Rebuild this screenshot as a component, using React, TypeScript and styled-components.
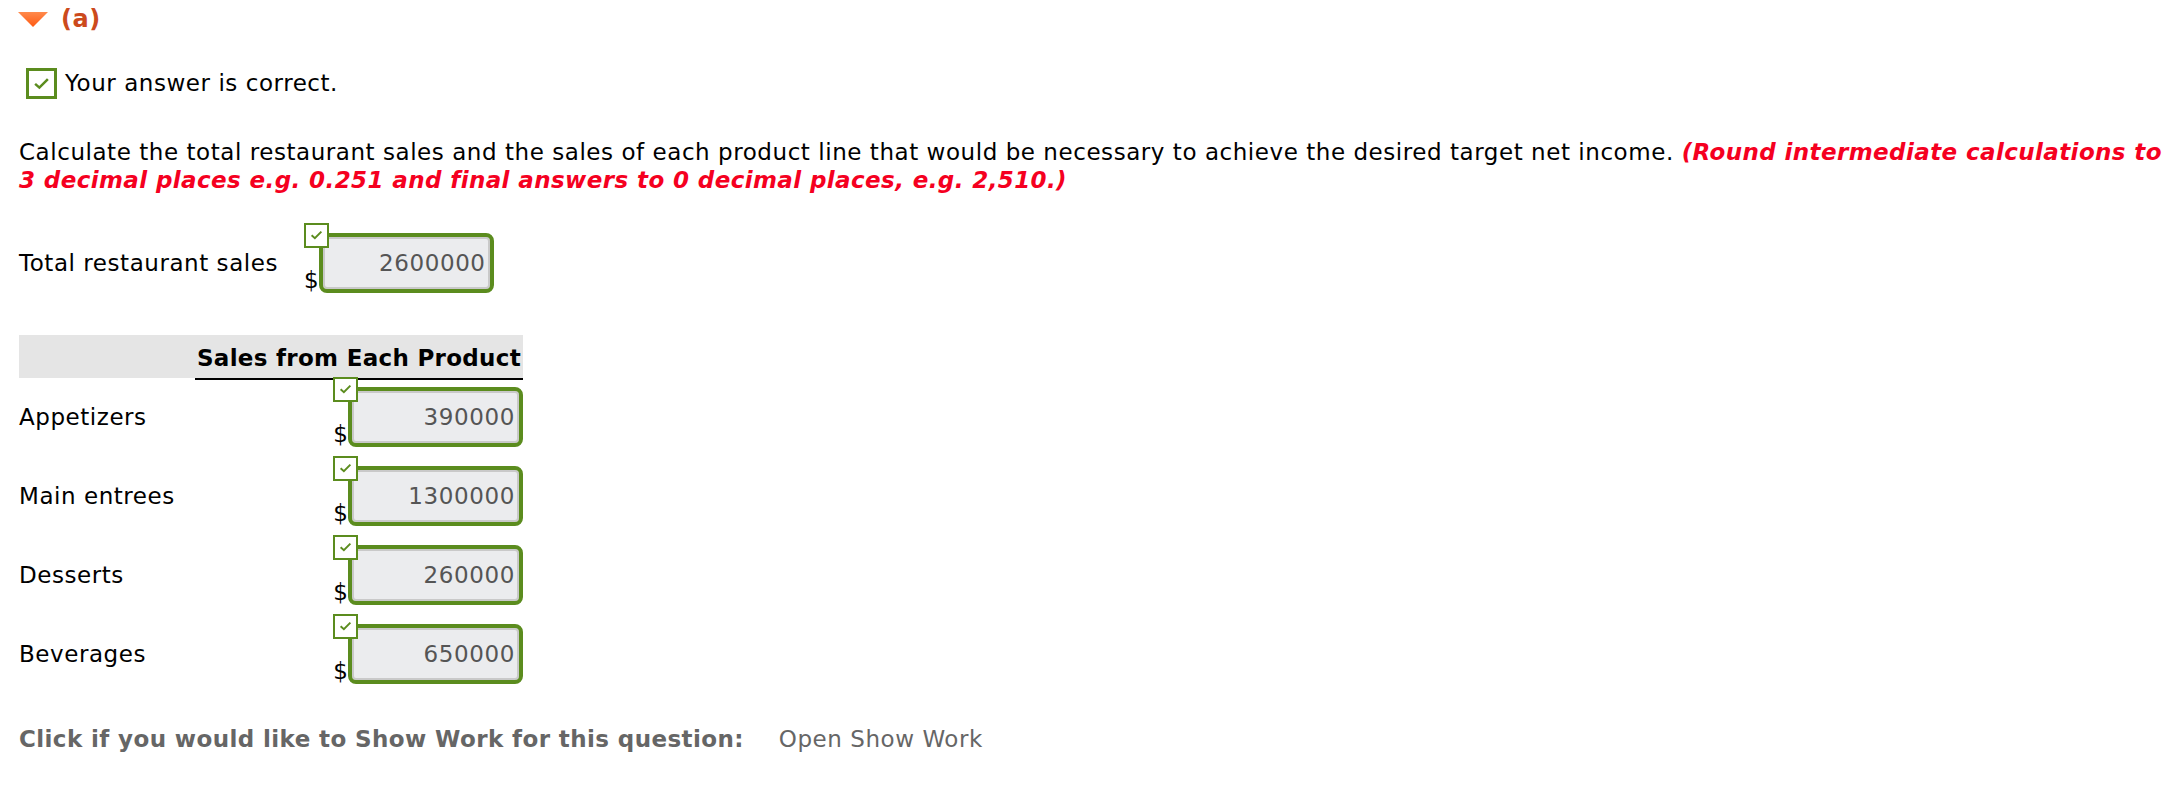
import React from 'react';
import styled, { createGlobalStyle } from 'styled-components';

const GlobalStyle = createGlobalStyle`
  body {
    margin: 0;
    background: #ffffff;
    font-family: 'DejaVu Sans', Verdana, sans-serif;
    color: #000000;
  }
`;

const green = '#5b8c1e';

const Page = styled.div`
  padding: 6px 18px 0 19px;
  font-size: 23px;
  letter-spacing: 0.55px;
`;

const PartHeader = styled.div`
  display: flex;
  align-items: center;
  gap: 13px;
  height: 26px;
  line-height: 26px;
  margin-left: -1px;
`;

const PartTitle = styled.span`
  font-weight: bold;
  font-size: 24px;
  color: #cc4a1c;
`;

const Feedback = styled.div`
  display: flex;
  align-items: center;
  gap: 8px;
  margin: 36px 0 0 7px;
  line-height: 31px;
`;

const CheckBox = styled.span<{ $size: number; $border: number }>`
  display: inline-flex;
  align-items: center;
  justify-content: center;
  box-sizing: border-box;
  width: ${(p) => p.$size}px;
  height: ${(p) => p.$size}px;
  border: ${(p) => p.$border}px solid ${green};
  background: #ffffff;
`;

const Question = styled.p`
  margin: 39px 0 0;
  line-height: 28px;
`;

const Hint = styled.span`
  color: #f5001f;
  font-weight: bold;
  font-style: italic;
  letter-spacing: 0.4px;
`;

const TotalRow = styled.div`
  display: flex;
  align-items: center;
  gap: 26px;
  margin-top: 39px;
  height: 60px;
`;

const AnswerCell = styled.span`
  position: relative;
  display: inline-flex;
  align-items: flex-end;
`;

const Dollar = styled.span`
  line-height: 22px;
  margin-bottom: 2px;
  letter-spacing: 0;
`;

const FieldCheck = styled.span`
  position: absolute;
  left: 0;
  top: -14px;
  z-index: 1;
`;

const AnswerInput = styled.input`
  box-sizing: border-box;
  width: 175px;
  height: 60px;
  border: 4px solid ${green};
  border-radius: 8px;
  box-shadow: inset 0 0 0 2px #c9c9c9;
  background: #ebecee;
  color: #555555;
  font-family: 'DejaVu Sans', Verdana, sans-serif;
  font-size: 23px;
  letter-spacing: 0.6px;
  text-align: right;
  padding: 0 4px 0 0;
  outline: none;
`;

const SalesTable = styled.div`
  display: grid;
  grid-template-columns: 176px 328px;
  margin-top: 42px;
`;

const HeadBlank = styled.div`
  background: #e5e5e5;
  height: 43px;
`;

const HeadCell = styled.div`
  background: #e5e5e5;
  height: 43px;
  border-bottom: 2px solid #000000;
  font-weight: bold;
  text-align: center;
  white-space: nowrap;
  line-height: 46px;
  letter-spacing: 0.3px;
`;

const RowLabel = styled.div`
  display: flex;
  align-items: center;
  height: 79px;
  padding-bottom: 5px;
  box-sizing: border-box;
`;

const RowValue = styled.div`
  display: flex;
  justify-content: flex-end;
  align-items: flex-start;
  height: 79px;
  padding-top: 7px;
  box-sizing: border-box;
`;

const ShowWork = styled.div`
  display: flex;
  gap: 35px;
  margin-top: 30px;
  line-height: 26px;
  color: #666666;
`;

const ShowWorkLabel = styled.span`
  font-weight: bold;
  letter-spacing: 0.4px;
`;

const Tick = ({ size }: { size: number }) => (
  <svg width={size} height={size * 0.75} viewBox="0 0 16 12">
    <path d="M2 6.5 L6 10 L14 2" fill="none" stroke={green} strokeWidth="2.4" />
  </svg>
);

const Answer = ({ value }: { value: string }) => (
  <AnswerCell>
    <FieldCheck>
      <CheckBox $size={25} $border={2}>
        <Tick size={13} />
      </CheckBox>
    </FieldCheck>
    <Dollar>$</Dollar>
    <AnswerInput readOnly value={value} />
  </AnswerCell>
);

const products = [
  { name: 'Appetizers', value: '390000' },
  { name: 'Main entrees', value: '1300000' },
  { name: 'Desserts', value: '260000' },
  { name: 'Beverages', value: '650000' },
];

export default function App() {
  return (
    <>
      <GlobalStyle />
      <Page>
        <PartHeader>
          <svg width="30" height="16" viewBox="0 0 30 16">
            <defs>
              <linearGradient id="tri" x1="0" y1="0" x2="0" y2="1">
                <stop offset="0" stopColor="#ff8a4c" />
                <stop offset="1" stopColor="#ff5a12" />
              </linearGradient>
            </defs>
            <polygon points="0,1 30,1 15,16" fill="url(#tri)" />
          </svg>
          <PartTitle>(a)</PartTitle>
        </PartHeader>

        <Feedback>
          <CheckBox $size={31} $border={3}>
            <Tick size={17} />
          </CheckBox>
          <span>Your answer is correct.</span>
        </Feedback>

        <Question>
          Calculate the total restaurant sales and the sales of each product line that would be
          necessary to achieve the desired target net income.{' '}
          <Hint>
            (Round intermediate calculations to 3 decimal places e.g. 0.251 and final answers to 0
            decimal places, e.g. 2,510.)
          </Hint>
        </Question>

        <TotalRow>
          <span>Total restaurant sales</span>
          <Answer value="2600000" />
        </TotalRow>

        <SalesTable>
          <HeadBlank />
          <HeadCell>Sales from Each Product</HeadCell>
          {products.map((p) => (
            <React.Fragment key={p.name}>
              <RowLabel>{p.name}</RowLabel>
              <RowValue>
                <Answer value={p.value} />
              </RowValue>
            </React.Fragment>
          ))}
        </SalesTable>

        <ShowWork>
          <ShowWorkLabel>Click if you would like to Show Work for this question:</ShowWorkLabel>
          <span>Open Show Work</span>
        </ShowWork>
      </Page>
    </>
  );
}
